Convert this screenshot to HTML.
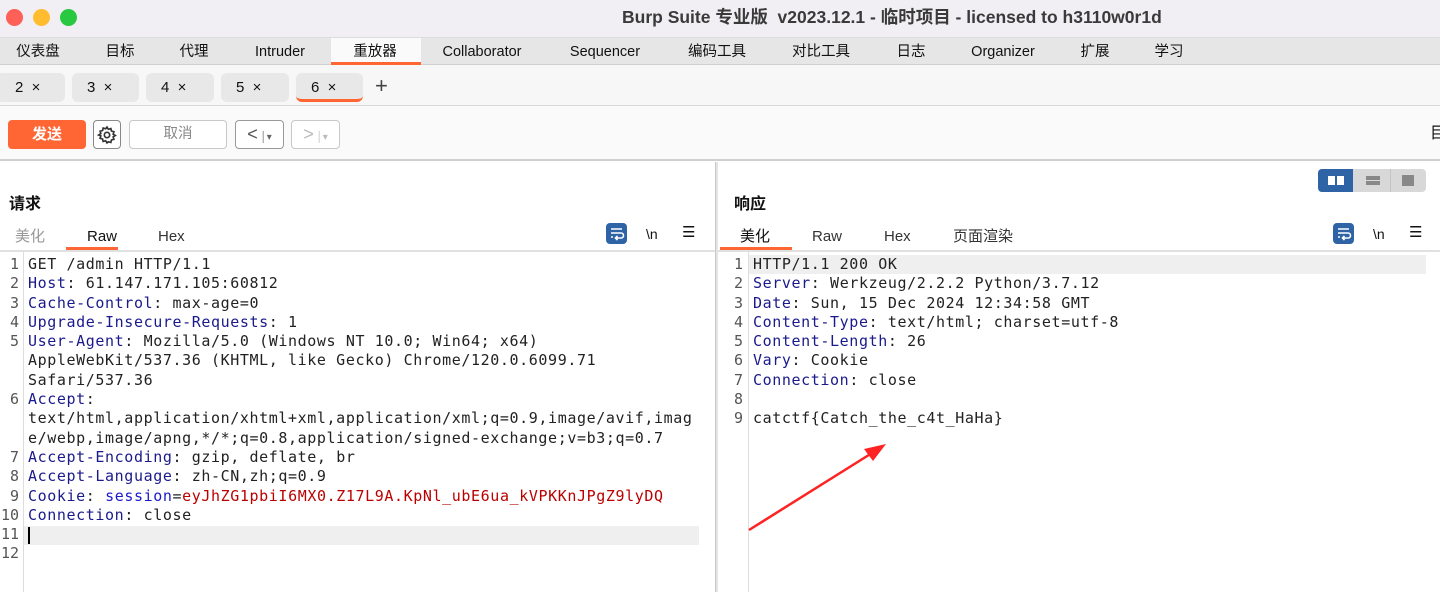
<!DOCTYPE html>
<html><head><meta charset="utf-8"><style>
*{margin:0;padding:0;box-sizing:border-box}
body{width:1440px;height:592px;overflow:hidden;background:#fff;font-family:"Liberation Sans","Noto Sans CJK SC",sans-serif;position:relative;color:#222;line-height:20px}
.a{position:absolute}
.title{left:0;top:0;width:1440px;height:38px;background:#f1eff3;border-bottom:1px solid #dcdcdc}
.dot{top:9px;width:17px;height:17px;border-radius:50%}
.menu{left:0;top:38px;width:1440px;height:27px;background:#e6e6e6;border-bottom:1px solid #d0d0d0}
.mi{top:42px;font-size:14.5px;color:#111;transform:translateX(-50%);white-space:nowrap;line-height:20px}
.tabs{left:0;top:65px;width:1440px;height:41px;background:#f7f7f7;border-bottom:1px solid #d8d8d8}
.st{top:73px;height:29px;background:#e8e8e8;border-radius:6px;font-size:15px;color:#111;padding:5px 0 0 15px}
.tool{left:0;top:106px;width:1440px;height:55px;background:#fafafa;border-bottom:2px solid #cfcfcf}
.btn{border:1px solid #c8c8c8;border-radius:4px;background:#fff;font-size:14.5px;color:#888;text-align:center}
.code{font-family:"DejaVu Sans Mono",monospace;font-size:15px;line-height:19.3px;white-space:pre;letter-spacing:0.6px}
.ln{font-family:"DejaVu Sans Mono",monospace;font-size:15px;line-height:19.3px;color:#555;text-align:right;white-space:pre}
.k{color:#1a1a8c}.r{color:#b00}
.ptab{font-size:15px;color:#333;line-height:20px}
</style></head><body>
<div class="a title"></div>
<div class="a dot" style="left:6px;background:#fe5f57"></div>
<div class="a dot" style="left:33px;background:#febc2e"></div>
<div class="a dot" style="left:60px;background:#28c840"></div>
<div class="a" style="left:622px;top:6px;font-size:17.5px;font-weight:bold;color:#3a3a3a;white-space:nowrap;line-height:22px">Burp Suite 专业版&nbsp; v2023.12.1 - 临时项目 - licensed to h3110w0r1d</div>
<div class="a menu"></div>
<div class="a" style="left:331px;top:38px;width:90px;height:27px;background:#fafafa;border-bottom:3px solid #ff6633"></div>
<div class="a mi" style="left:38px">仪表盘</div>
<div class="a mi" style="left:120px">目标</div>
<div class="a mi" style="left:194px">代理</div>
<div class="a mi" style="left:280px">Intruder</div>
<div class="a mi" style="left:375px">重放器</div>
<div class="a mi" style="left:482px">Collaborator</div>
<div class="a mi" style="left:605px">Sequencer</div>
<div class="a mi" style="left:717px">编码工具</div>
<div class="a mi" style="left:821px">对比工具</div>
<div class="a mi" style="left:911px">日志</div>
<div class="a mi" style="left:1003px">Organizer</div>
<div class="a mi" style="left:1095px">扩展</div>
<div class="a mi" style="left:1169px">学习</div>
<div class="a tabs"></div>
<div class="a st" style="left:-4px;width:69px;padding-left:19px">2 &nbsp;×</div>
<div class="a st" style="left:72px;width:67px">3 &nbsp;×</div>
<div class="a st" style="left:146px;width:68px">4 &nbsp;×</div>
<div class="a st" style="left:221px;width:68px">5 &nbsp;×</div>
<div class="a st" style="left:296px;width:67px;border-bottom:3px solid #ff6633">6 &nbsp;×</div>
<div class="a" style="left:375px;top:76px;font-size:22px;color:#444">+</div>
<div class="a tool"></div>
<div class="a" style="left:8px;top:120px;width:78px;height:29px;background:#ff6633;border-radius:4px;color:#fff;font-size:15px;text-align:center;line-height:29px;font-weight:bold">发送</div>
<div class="a btn" style="left:93px;top:120px;width:28px;height:29px;border-color:#888;padding-top:4px">
<svg width="20" height="20" viewBox="0 0 24 24" fill="none" stroke="#333" stroke-width="2"><circle cx="12" cy="12" r="3.2"/><path d="M12 2.5l1.6 2.6 3-.9.7 3 3 .8-.9 3 2.6 1.6-2.6 1.6.9 3-3 .8-.7 3-3-.9L12 21.5l-1.6-2.6-3 .9-.7-3-3-.8.9-3L2 12l2.6-1.6-.9-3 3-.8.7-3 3 .9z"/></svg></div>
<div class="a btn" style="left:129px;top:120px;width:98px;height:29px;line-height:27px">取消</div>
<div class="a btn" style="left:235px;top:120px;width:49px;height:29px;border-color:#999;color:#555;line-height:26px;font-size:18px">&lt;<span style="font-size:10px;color:#666"> │▾</span></div>
<div class="a btn" style="left:291px;top:120px;width:49px;height:29px;color:#bbb;line-height:26px;font-size:18px">&gt;<span style="font-size:10px"> │▾</span></div>
<div class="a" style="left:1430px;top:124px;font-size:16px;color:#111">目</div>
<div class="a" style="left:715px;top:162px;width:3px;height:430px;background:#e4e4e4;border-left:1px solid #c8c8c8"></div>
<div class="a" style="left:1318px;top:169px;width:108px;height:23px;background:#d8d8d8;border-radius:4px;overflow:hidden">
<div class="a" style="left:0;top:0;width:35px;height:23px;background:#2e64a6"></div>
<div class="a" style="left:10px;top:7px;width:7px;height:9px;background:#fff"></div><div class="a" style="left:19px;top:7px;width:7px;height:9px;background:#fff"></div>
<div class="a" style="left:48px;top:7px;width:14px;height:4px;background:#888"></div><div class="a" style="left:48px;top:12px;width:14px;height:4px;background:#888"></div>
<div class="a" style="left:72px;top:0;width:1px;height:23px;background:#c4c4c4"></div>
<div class="a" style="left:84px;top:6px;width:12px;height:11px;background:#888"></div>
</div>
<div class="a" style="left:9px;top:195px;font-size:16px;font-weight:bold;color:#111">请求</div>
<div class="a ptab" style="left:15px;top:227px;color:#999">美化</div>
<div class="a ptab" style="left:87px;top:227px;color:#111">Raw</div>
<div class="a ptab" style="left:158px;top:227px">Hex</div>
<div class="a" style="left:66px;top:247px;width:52px;height:3px;background:#ff6633"></div>
<div class="a" style="left:0;top:250px;width:715px;height:2px;background:#e0e0e0"></div>
<div class="a" style="left:606px;top:223px;width:21px;height:21px;background:#2e64a6;border-radius:4px"><svg width="21" height="21" viewBox="0 0 21 21" fill="none" stroke="#fff" stroke-width="1.6"><path d="M5 6h11M5 10h10a2.5 2.5 0 0 1 0 5h-5M11.5 13l-2 2 2 2M5 14h2"/></svg></div>
<div class="a" style="left:646px;top:224px;font-size:14px;color:#111">\n</div>
<div class="a" style="left:682px;top:223px;font-size:15px;color:#111">☰</div>
<div class="a" style="left:23px;top:252px;width:1px;height:340px;background:#ddd"></div>
<div class="a" style="left:24px;top:526px;width:675px;height:19px;background:#efefef"></div>
<div class="a" style="left:28px;top:527px;width:2px;height:17px;background:#000"></div>
<div class="a ln" style="left:0;top:255px;width:19px">1
2
3
4
5


6


7
8
9
10
11
12</div>
<div class="a code" style="left:28px;top:255px">GET /admin HTTP/1.1
<span class="k">Host</span>: 61.147.171.105:60812
<span class="k">Cache-Control</span>: max-age=0
<span class="k">Upgrade-Insecure-Requests</span>: 1
<span class="k">User-Agent</span>: Mozilla/5.0 (Windows NT 10.0; Win64; x64)
AppleWebKit/537.36 (KHTML, like Gecko) Chrome/120.0.6099.71
Safari/537.36
<span class="k">Accept</span>:
text/html,application/xhtml+xml,application/xml;q=0.9,image/avif,imag
e/webp,image/apng,*/*;q=0.8,application/signed-exchange;v=b3;q=0.7
<span class="k">Accept-Encoding</span>: gzip, deflate, br
<span class="k">Accept-Language</span>: zh-CN,zh;q=0.9
<span class="k">Cookie</span>: <span style="color:#1a1acc">session</span>=<span class="r">eyJhZG1pbiI6MX0.Z17L9A.KpNl_ubE6ua_kVPKKnJPgZ9lyDQ</span>
<span class="k">Connection</span>: close</div>
<div class="a" style="left:734px;top:195px;font-size:16px;font-weight:bold;color:#111">响应</div>
<div class="a ptab" style="left:740px;top:227px;color:#111">美化</div>
<div class="a ptab" style="left:812px;top:227px">Raw</div>
<div class="a ptab" style="left:884px;top:227px">Hex</div>
<div class="a ptab" style="left:953px;top:227px">页面渲染</div>
<div class="a" style="left:720px;top:247px;width:72px;height:3px;background:#ff6633"></div>
<div class="a" style="left:718px;top:250px;width:722px;height:2px;background:#e0e0e0"></div>
<div class="a" style="left:1333px;top:223px;width:21px;height:21px;background:#2e64a6;border-radius:4px"><svg width="21" height="21" viewBox="0 0 21 21" fill="none" stroke="#fff" stroke-width="1.6"><path d="M5 6h11M5 10h10a2.5 2.5 0 0 1 0 5h-5M11.5 13l-2 2 2 2M5 14h2"/></svg></div>
<div class="a" style="left:1373px;top:224px;font-size:14px;color:#111">\n</div>
<div class="a" style="left:1409px;top:223px;font-size:15px;color:#111">☰</div>
<div class="a" style="left:748px;top:252px;width:1px;height:340px;background:#ddd"></div>
<div class="a" style="left:749px;top:255px;width:677px;height:19px;background:#efefef"></div>
<div class="a ln" style="left:726px;top:255px;width:17px">1
2
3
4
5
6
7
8
9</div>
<div class="a code" style="left:753px;top:255px">HTTP/1.1 200 OK
<span class="k">Server</span>: Werkzeug/2.2.2 Python/3.7.12
<span class="k">Date</span>: Sun, 15 Dec 2024 12:34:58 GMT
<span class="k">Content-Type</span>: text/html; charset=utf-8
<span class="k">Content-Length</span>: 26
<span class="k">Vary</span>: Cookie
<span class="k">Connection</span>: close

catctf{Catch_the_c4t_HaHa}</div>
<svg class="a" style="left:0;top:0" width="1440" height="592"><path d="M749 530 L872 453" stroke="#f22" stroke-width="2.5"/><path d="M886 444 L864 449 L873 461 Z" fill="#f22"/></svg>
</body></html>
